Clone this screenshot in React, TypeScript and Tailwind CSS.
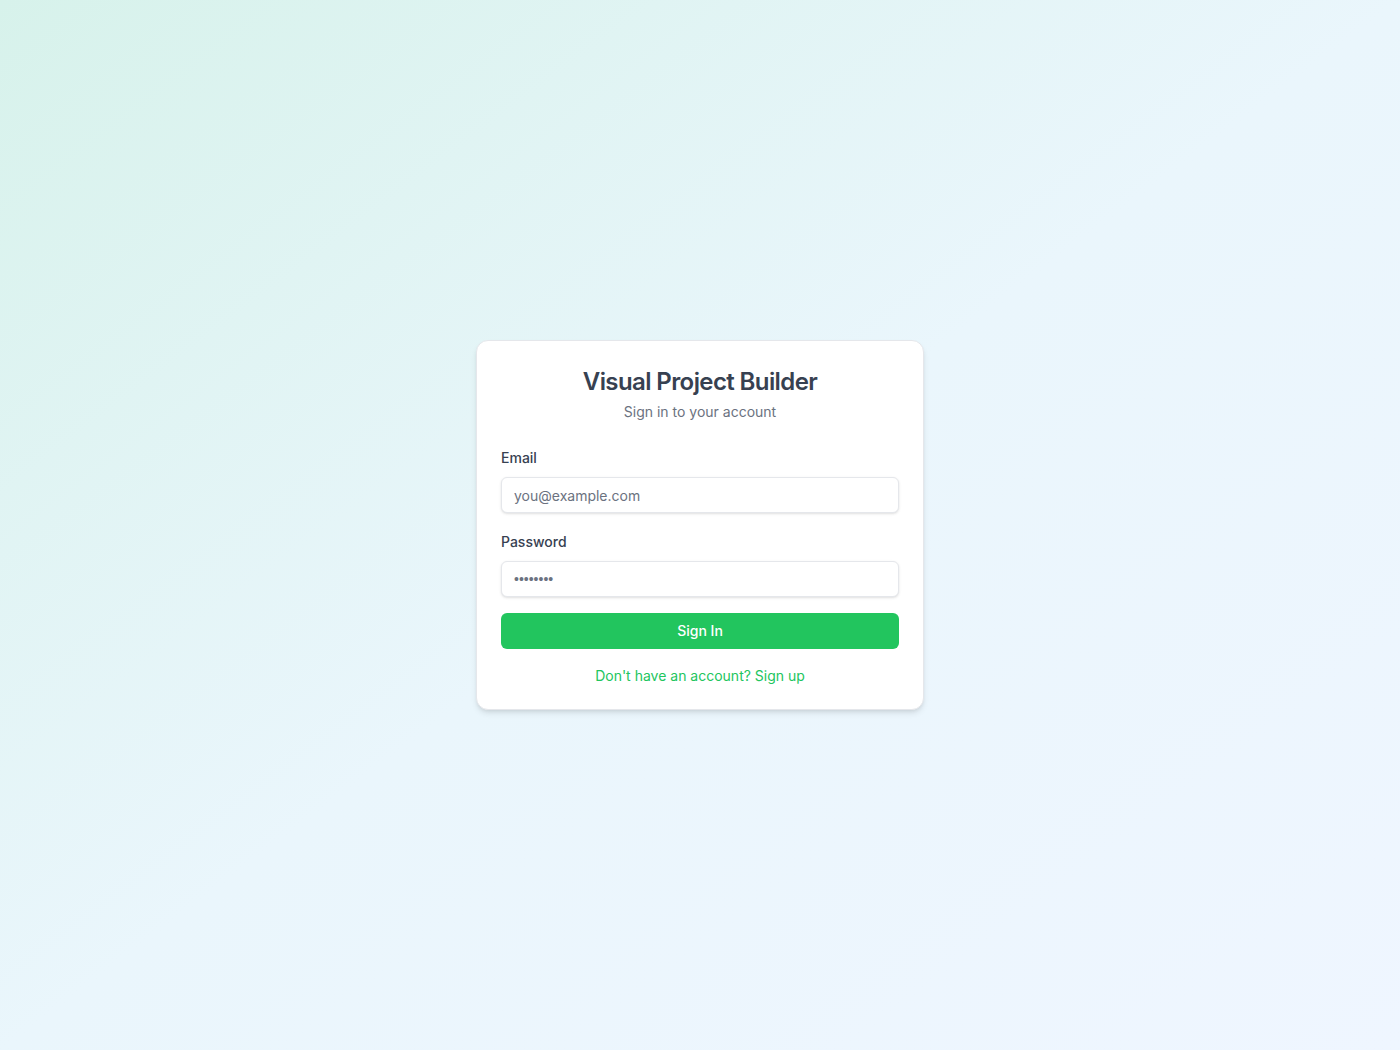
export default function App() {
  return (
    <div className="flex min-h-screen items-center justify-center bg-gradient-to-br from-[#d7f2eb] via-[#eaf6fc] to-[#eff6ff] px-4 font-['Inter',sans-serif]">
      <div className="w-full max-w-[448px] rounded-xl border border-[#e5e7eb] bg-white px-6 pb-[23px] pt-[25px] shadow-md">
        {/* Header */}
        <div className="mb-[26px] text-center">
          <h1 className="text-2xl font-semibold tracking-tight text-[#374151]">
            Visual Project Builder
          </h1>
          <p className="mt-1 text-sm text-[#6b7280]">Sign in to your account</p>
        </div>

        <form className="flex flex-col" onSubmit={(e) => e.preventDefault()}>
          <label className="mb-[9px] text-sm font-medium text-[#374151]">
            Email
          </label>
          <input
            type="email"
            placeholder="you@example.com"
            className="h-9 w-full rounded-md border border-[#e5e7eb] bg-white px-3 text-sm text-[#374151] shadow-sm placeholder:text-[#6b7280] focus:outline-none"
          />

          <label className="mb-[9px] mt-[19px] text-sm font-medium text-[#374151]">
            Password
          </label>
          <input
            type="password"
            defaultValue="password"
            className="h-9 w-full rounded-md border border-[#e5e7eb] bg-white px-3 font-['Liberation_Sans',sans-serif] text-sm text-[#6b7280] shadow-sm focus:outline-none"
          />

          <button
            type="submit"
            className="mt-4 h-9 w-full rounded-md bg-[#22c55e] text-sm font-medium text-white"
          >
            Sign In
          </button>

          <a href="#" className="mt-[17px] text-center text-sm text-[#22c55e]">
            Don't have an account? Sign up
          </a>
        </form>
      </div>
    </div>
  );
}
